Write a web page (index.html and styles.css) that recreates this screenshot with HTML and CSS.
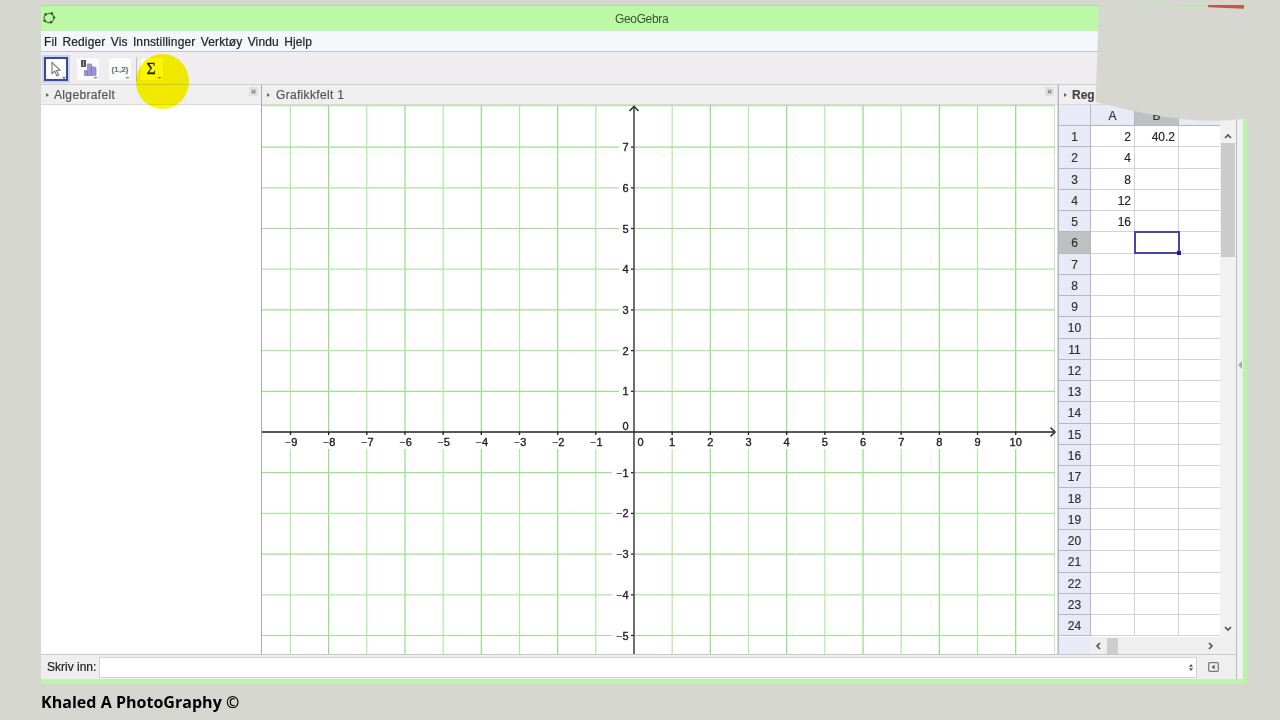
FILE: index.html
```html
<!DOCTYPE html>
<html lang="no">
<head>
    <meta charset="UTF-8">
    <meta name="viewport" content="width=device-width, initial-scale=1.0">
    <title>GeoGebra</title>
    <link rel="stylesheet" href="styles.css">
</head>
<body>
    <div class="window">
        <div class="title-bar">
            <svg class="logo" width="14" height="14" viewBox="0 0 14 14">
                <ellipse cx="7" cy="7" rx="5" ry="4.6" transform="rotate(-25 7 7)" fill="none" stroke="#4f8049" stroke-width="1.2"/>
                <g fill="#345c33"><circle cx="3.6" cy="3.4" r="1.3"/><circle cx="9.8" cy="2.4" r="1.3"/><circle cx="12" cy="6.5" r="1.3"/><circle cx="9" cy="11.2" r="1.3"/><circle cx="2.7" cy="9.8" r="1.3"/></g>
            </svg>
            <span class="title">GeoGebra</span>
        </div>
        <div class="menu-bar">
            <span>Fil</span><span>Rediger</span><span>Vis</span><span>Innstillinger</span><span>Verktøy</span><span>Vindu</span><span>Hjelp</span>
        </div>
        <div class="toolbar">
            <div class="tool selected">
                <svg width="20" height="20" viewBox="0 0 20 20"><path d="M6 3.500v11l2.800-2.400 2 4.600 1.800-.8-2-4.400 3.400-.4z" fill="#fff" stroke="#777" stroke-width="1.1"/><path d="M16 18h4l-2 2z" fill="#668"/></svg>
            </div>
            <div class="tool">
                <svg width="20" height="20" viewBox="0 0 20 20"><path d="M3 1h5v7H3z" fill="#555"/><path d="M5.500 2v5" stroke="#aaa"/><path d="M6.500 16.500v-5h3V5h4v2.500l4.500 1v8z" fill="#9b94d3" stroke="#8a83c8" stroke-width=".8"/><path d="M9.500 12v4M13.500 8v8" stroke="#736bb8" stroke-width=".7"/><path d="M15 18h5l-2.500 2z" fill="#999"/></svg>
            </div>
            <div class="tool">
                <svg width="20" height="20" viewBox="0 0 20 20"><text x="1.500" y="12.500" class="tool-text" textLength="17">{1,2}</text><path d="M15 18h5l-2.500 2z" fill="#999"/></svg>
            </div>
            <div class="separator"></div>
            <div class="tool">
                <svg width="20" height="20" viewBox="0 0 20 20"><text x="4.500" y="15" class="sigma">Σ</text><path d="M15 18h5l-2.500 2z" fill="#999"/></svg>
            </div>
        </div>
        <div class="main">
            <div class="content">
                <div class="panels">
                    <div class="panel algebra">
                        <div class="panel-header"><i class="arrow"></i><span class="algebra-title">Algebrafelt</span><b class="close">×</b></div>
                    </div>
                    <div class="panel graphics">
                        <div class="panel-header"><i class="arrow"></i><span class="graphics-title">Grafikkfelt 1</span><b class="close">×</b></div>
                        <svg id="graph" width="795" height="549" viewBox="262 105 795 549"></svg>
                    </div>
                    <div class="panel sheet">
                        <div class="panel-header"><i class="arrow"></i><span class="sheet-title">Reg</span></div>
                        <div class="sheet-body">
                            <div class="cells" id="cells">
                                <div class="head"></div><div class="head">A</div><div class="head active">B</div><div class="head"></div>
                            </div>
                            <div class="scroll-y">
                                <svg width="8" height="6" viewBox="0 0 8 6"><path d="M1 5l3-3 3 3" class="chevron"/></svg>
                                <div class="thumb-y"></div>
                                <svg class="down" width="8" height="6" viewBox="0 0 8 6"><path d="M1 1l3 3 3-3" class="chevron"/></svg>
                            </div>
                        </div>
                        <div class="scroll-x">
                            <div class="corner"></div>
                            <svg width="6" height="8" viewBox="0 0 6 8"><path d="M5 1L2 4l3 3" class="chevron"/></svg>
                            <div class="thumb-x"></div>
                            <svg class="right" width="6" height="8" viewBox="0 0 6 8"><path d="M1 1l3 3-3 3" class="chevron"/></svg>
                        </div>
                    </div>
                </div>
                <div class="input-bar">
                    <label>Skriv inn:</label>
                    <div class="input-field">
                        <svg width="6" height="9" viewBox="0 0 6 9"><path d="M1 3.800L3 1l2 2.800zM1 5.200L3 8l2-2.800z" fill="#555"/></svg>
                    </div>
                    <svg class="help" width="11" height="10" viewBox="0 0 11 10"><rect x=".7" y=".7" width="9.6" height="8.6" rx="1" fill="none" stroke="#777" stroke-width="1.2"/><path d="M6.600 2.800v4.400L3.600 5z" fill="#555"/></svg>
                </div>
            </div>
            <div class="side-strip"><i class="side-arrow"></i></div>
        </div>
    </div>
    <div class="footer-text">Khaled A PhotoGraphy ©</div>

    <div class="highlight"></div>
    <svg class="cover" width="190" height="124" viewBox="1090 0 190 124">
        <path d="M1099 0V6L1095.500 102Q1150 116 1190 120Q1220 122 1248 118.500H1280V0Z" fill="#d5d7d0"/>
        <path d="M1125 5H1247V8L1208 6.500Z" fill="#b5ec9f"/>
        <path d="M1208 5H1244V8.800L1208 7.200Z" fill="#c2564a"/>
        <path d="M1095 0H1280V5H1095Z" fill="#d5d7d0"/>
    </svg>

    <script src="script.js"></script>
</body>
</html>
```
FILE: styles.css
```css
* {
    box-sizing: border-box;
}
body {
    margin: 0;
    width: 1280px;
    height: 720px;
    overflow: hidden;
    position: relative;
    padding: 5px 33px 0 41px;
    background-color: #d5d7d0;
    font-family: "Liberation Sans", Arial, sans-serif;
    font-size: 12px;
    color: #222;
}
svg {
    display: block;
    flex: none;
}
.window {
    height: 679px;
    display: flex;
    flex-direction: column;
    background-color: #fff;
    border-right: 4px solid #b9f3a5;
    border-bottom: 5px solid #c2f1b1;
}
.title-bar {
    height: 26px;
    flex: none;
    display: flex;
    align-items: center;
    background-color: #bcf8a6;
    border-top: 1px solid #b0dda0;
}
.logo {
    margin: -1px 0 0 1px;
}
.title {
    margin-left: 559px;
    color: #35562e;
    letter-spacing: -0.35px;
}
.menu-bar {
    height: 21px;
    flex: none;
    display: flex;
    align-items: center;
    gap: 5.3px;
    padding: 1px 0 0 3px;
    background-color: #f4f6fb;
    border-bottom: 1px solid #c4c5c8;
    letter-spacing: 0.14px;
    -webkit-text-stroke: 0.2px #222;
}
.toolbar {
    height: 33px;
    flex: none;
    display: flex;
    align-items: center;
    padding: 1px 0 0 3px;
    background-color: #efedf0;
    border-bottom: 1px solid #cfcfd1;
}
.tool {
    width: 24px;
    height: 24px;
    margin-right: 8px;
    padding: 1px;
    background-color: #fbfbfc;
    border: 1px solid #ededf0;
}
.tool.selected {
    border: 2px solid #3d479b;
    padding: 0;
    box-shadow: 0 0 0 2px #ccd3ec;
}
.tool-text {
    font-size: 8px;
    fill: #3c5e45;
    stroke: #3c5e45;
    stroke-width: 0.2px;
}
.sigma {
    font: 16px "Liberation Serif", serif;
    fill: #222;
    stroke: #222;
    stroke-width: 0.3px;
}
.separator {
    width: 1px;
    height: 24px;
    margin: 0 3px 0 -4px;
    background-color: #c2c2c6;
}
.main {
    flex: 1;
    min-height: 0;
    display: flex;
}
.content {
    width: 1196px;
    display: flex;
    flex-direction: column;
    border-right: 1px solid #b9b9c0;
}
.panels {
    height: 569px;
    display: flex;
}
.panel-header {
    height: 20px;
    flex: none;
    display: flex;
    align-items: center;
    padding: 1px 0 0 5px;
    background-color: #f0eff0;
    border-bottom: 1px solid #d8d8d8;
    color: #555;
    -webkit-text-stroke: 0.2px #555;
}
.arrow {
    border: 2.5px solid transparent;
    border-left: 3px solid #666;
    border-right: 0;
    margin-right: 5px;
}
.algebra-title {
    letter-spacing: 0.35px;
}
.graphics-title {
    margin-left: 1px;
    letter-spacing: 0.32px;
}
.sheet-title {
    font-weight: bold;
    color: #444;
}
.close {
    width: 9px;
    height: 9px;
    margin: -7px 3px 0 auto;
    background-color: #e1e1e2;
    color: #888;
    font-size: 8px;
    line-height: 9px;
    text-align: center;
}
.algebra {
    width: 221px;
    border-right: 1px solid #aaa;
}
.graphics {
    width: 796px;
    border-right: 1px solid #d5d5da;
}
.sheet {
    width: 178px;
    display: flex;
    flex-direction: column;
    border-left: 1px solid #b5b5bd;
}
.axis-label {
    font-size: 11px;
    fill: #222;
    stroke: #222;
    stroke-width: 0.35px;
}
.axis-label .minus {
    stroke: none;
    fill: #333;
}
.sheet-body {
    height: 532px;
    display: flex;
}
.cells {
    width: 161px;
    display: grid;
    grid-template-columns: 32px 44px 44px 41px;
    grid-template-rows: 21px;
    grid-auto-rows: 21.28px;
}
.cells div {
    border-right: 1px solid #d2d2d7;
    border-bottom: 1px solid #d2d2d7;
    padding-right: 3px;
    line-height: 23px;
    text-align: right;
    -webkit-text-stroke: 0.2px #333;
}
.cells div:nth-child(4n) {
    border-right: 0;
}
.cells .head {
    background-color: #e8ebf7;
    border-color: #b5b7c1;
    padding: 0;
    text-align: center;
    color: #333;
}
.cells .active {
    background-color: #bfc0c2;
}
.cells .cursor {
    position: relative;
    outline: 2px solid #4a45a8;
    outline-offset: -1px;
    border: 0;
    margin-bottom: 1px;
}
.cells .cursor::after {
    content: "";
    position: absolute;
    right: -2px;
    bottom: -2px;
    width: 4px;
    height: 4px;
    background-color: #2416a5;
}
.scroll-y {
    width: 16px;
    padding: 28px 1px 5px 0;
    display: flex;
    flex-direction: column;
    align-items: center;
    background-color: #f1f1f1;
}
.chevron {
    fill: none;
    stroke: #555;
    stroke-width: 1.7;
}
.thumb-y {
    width: 14px;
    height: 114px;
    margin-top: 4px;
    background-color: #cbcbcb;
}
.down {
    margin-top: auto;
}
.scroll-x {
    height: 17px;
    display: flex;
    align-items: center;
    background-color: #efefef;
}
.corner {
    width: 31px;
    height: 17px;
    margin-right: 5px;
    background-color: #e8ebf7;
}
.thumb-x {
    width: 11px;
    height: 16px;
    margin-left: 6px;
    background-color: #cdcdcd;
}
.right {
    margin: 0 22px 0 auto;
}
.input-bar {
    height: 25px;
    display: flex;
    align-items: center;
    background-color: #efefef;
    border-top: 1px solid #c8c8c8;
}
.input-bar label {
    width: 58px;
    flex: none;
    padding-left: 6px;
    -webkit-text-stroke: 0.2px #222;
}
.input-field {
    width: 1098px;
    height: 21px;
    padding-right: 2px;
    display: flex;
    align-items: center;
    justify-content: flex-end;
    background-color: #fff;
    border: 1px solid #d2d2d2;
}
.help {
    margin-left: 11px;
}
.side-strip {
    width: 6px;
    display: flex;
    align-items: center;
    background-color: #f1f0f1;
}
.side-arrow {
    margin: -34px 0 0 1px;
    border: 4px solid transparent;
    border-right-color: #aaa;
    border-left: 0;
}
.footer-text {
    margin-top: 7px;
    font: bold 16px "Open Sans", sans-serif;
    letter-spacing: 0.03px;
    color: #000;
}
/* Pointer highlight over the toolbar */
.highlight {
    position: absolute;
    left: 136px;
    top: 54px;
    width: 53px;
    height: 55px;
    border-radius: 50%;
    background-color: #fffa00;
    mix-blend-mode: multiply;
    filter: blur(0.7px);
}
.cover {
    position: absolute;
    left: 1090px;
    top: 0;
}
```
FILE: script.js
```javascript
const graph = document.getElementById('graph');
const originX = 634, originY = 432;
const unitX = 38.17, unitY = 40.7;

function line(x1, y1, x2, y2, color, width) {
    return `<line x1="${x1}" y1="${y1}" x2="${x2}" y2="${y2}" stroke="${color}" stroke-width="${width}"/>`;
}

function label(i) {
    return i < 0 ? `<tspan class="minus">−</tspan>${-i}` : i;
}

function drawGraph() {
    let grid = line(262, 105.5, 1055, 105.5, '#b9e8ad', 1.5) + line(1054.5, 105, 1054.5, 654, '#c5eebb', 1);
    let axes = '';
    for (let i = -9; i <= 10; i++) {
        if (i === 0) continue;
        const x = originX + i * unitX;
        grid += line(x, 105, x, 654, i % 2 ? '#b0eaa0' : '#92dc84', 1.2);
        axes += `<rect x="${x - 10}" y="434" width="20" height="15" fill="#fff"/>`;
        axes += line(x, 432, x, 435, '#222', 1.3);
        axes += `<text class="axis-label" x="${i < 0 ? x + 0.5 : x}" y="445.500" text-anchor="middle">${label(i)}</text>`;
    }
    for (let i = -5; i <= 7; i++) {
        if (i === 0) continue;
        const y = originY - i * unitY;
        grid += line(262, y, 1055, y, i % 2 ? '#9be38c' : '#b0e6a3', 1.2);
        axes += `<rect x="${i < 0 ? 612 : 619}" y="${y - 6}" width="${i < 0 ? 21 : 14}" height="12" fill="#fff"/>`;
        axes += line(631, y, 634, y, '#222', 1.3);
        axes += `<text class="axis-label" x="628.500" y="${y + 4}" text-anchor="end">${label(i)}</text>`;
    }
    axes += '<text class="axis-label" x="628.500" y="429.500" text-anchor="end">0</text>';
    axes += '<text class="axis-label" x="637.500" y="445.500">0</text>';
    axes += line(634, 107, 634, 654, '#555', 1.7) + line(262, 432, 1055, 432, '#222', 1.5);
    axes += '<path d="M629.500 111L634 106.500L638.500 111M1050.500 427.500L1055 432L1050.500 436.500" fill="none" stroke="#333" stroke-width="1.6"/>';
    graph.innerHTML = grid + axes;
}

function fillCells() {
    const columnA = [2, 4, 8, 12, 16];
    let html = '';
    for (let row = 1; row <= 24; row++) {
        html += `<div class="head${row === 6 ? ' active' : ''}">${row}</div>`;
        html += `<div>${columnA[row - 1] || ''}</div>`;
        html += `<div${row === 6 ? ' class="cursor"' : ''}>${row === 1 ? '40.2' : ''}</div><div></div>`;
    }
    document.getElementById('cells').insertAdjacentHTML('beforeend', html);
}

drawGraph();
fillCells();
```
